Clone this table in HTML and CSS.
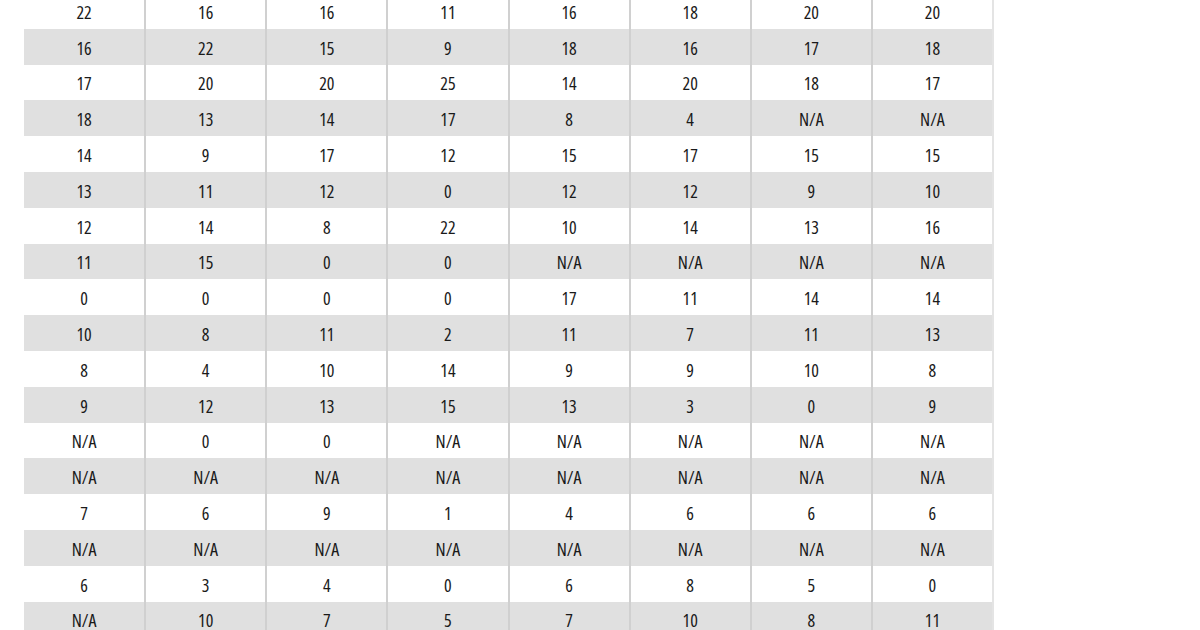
FILE: index.html
```html
<!DOCTYPE html>
<html>
<head>
<meta charset="utf-8">
<link rel="stylesheet" href="styles.css">
</head>
<body>
<div class="viewport">
<table class="grid">
<tbody>
<tr><td>22</td><td>16</td><td>16</td><td>11</td><td>16</td><td>18</td><td>20</td><td>20</td></tr>
<tr><td>16</td><td>22</td><td>15</td><td>9</td><td>18</td><td>16</td><td>17</td><td>18</td></tr>
<tr><td>17</td><td>20</td><td>20</td><td>25</td><td>14</td><td>20</td><td>18</td><td>17</td></tr>
<tr><td>18</td><td>13</td><td>14</td><td>17</td><td>8</td><td>4</td><td>N/A</td><td>N/A</td></tr>
<tr><td>14</td><td>9</td><td>17</td><td>12</td><td>15</td><td>17</td><td>15</td><td>15</td></tr>
<tr><td>13</td><td>11</td><td>12</td><td>0</td><td>12</td><td>12</td><td>9</td><td>10</td></tr>
<tr><td>12</td><td>14</td><td>8</td><td>22</td><td>10</td><td>14</td><td>13</td><td>16</td></tr>
<tr><td>11</td><td>15</td><td>0</td><td>0</td><td>N/A</td><td>N/A</td><td>N/A</td><td>N/A</td></tr>
<tr><td>0</td><td>0</td><td>0</td><td>0</td><td>17</td><td>11</td><td>14</td><td>14</td></tr>
<tr><td>10</td><td>8</td><td>11</td><td>2</td><td>11</td><td>7</td><td>11</td><td>13</td></tr>
<tr><td>8</td><td>4</td><td>10</td><td>14</td><td>9</td><td>9</td><td>10</td><td>8</td></tr>
<tr><td>9</td><td>12</td><td>13</td><td>15</td><td>13</td><td>3</td><td>0</td><td>9</td></tr>
<tr><td>N/A</td><td>0</td><td>0</td><td>N/A</td><td>N/A</td><td>N/A</td><td>N/A</td><td>N/A</td></tr>
<tr><td>N/A</td><td>N/A</td><td>N/A</td><td>N/A</td><td>N/A</td><td>N/A</td><td>N/A</td><td>N/A</td></tr>
<tr><td>7</td><td>6</td><td>9</td><td>1</td><td>4</td><td>6</td><td>6</td><td>6</td></tr>
<tr><td>N/A</td><td>N/A</td><td>N/A</td><td>N/A</td><td>N/A</td><td>N/A</td><td>N/A</td><td>N/A</td></tr>
<tr><td>6</td><td>3</td><td>4</td><td>0</td><td>6</td><td>8</td><td>5</td><td>0</td></tr>
<tr><td>N/A</td><td>10</td><td>7</td><td>5</td><td>7</td><td>10</td><td>8</td><td>11</td></tr>
</tbody>
</table>
</div>
</body>
</html>
```
FILE: styles.css
```css
html, body {
  margin: 0;
  padding: 0;
  background: #ffffff;
}
.viewport {
  width: 1200px;
  height: 630px;
  overflow: hidden;
}
.grid {
  margin: -7px 0 0 24px;
  width: 970px;
  table-layout: fixed;
  border-collapse: collapse;
  font-family: "Open Sans", "DejaVu Sans Condensed", sans-serif;
  font-stretch: 75%;
  font-weight: 520;
  font-size: 18px;
  color: #1a1a1a;
}
.grid td {
  height: 35.8px;
  padding: 2px 0 0 0;
  text-align: center;
  vertical-align: middle;
  border-left: 2px solid #d0d0d0;
  box-sizing: border-box;
}
.grid td:first-child {
  border-left: none;
}
.grid td:last-child {
  border-right: 2px solid #e4e4e4;
}
.grid tr:nth-child(even) td {
  background: #e0e0e0;
}
```
